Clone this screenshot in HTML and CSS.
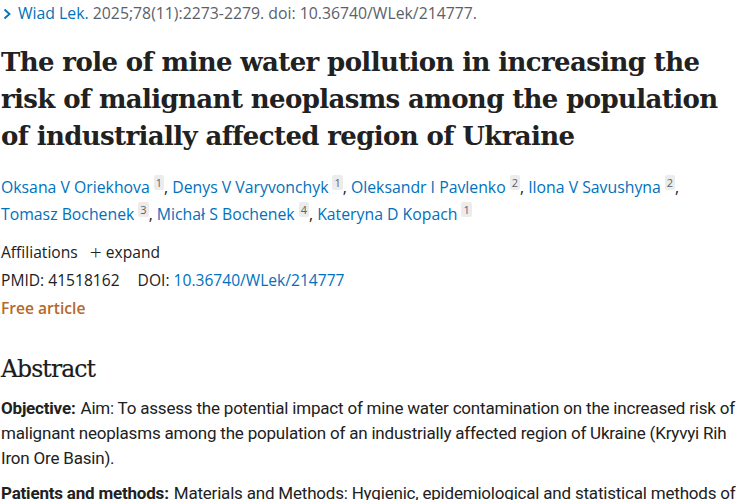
FILE: index.html
```html
<!DOCTYPE html>
<html>
<head>
<meta charset="utf-8">
<link rel="stylesheet" href="styles.css">
</head>
<body>
<div class="page">
  <div class="cite"><svg class="chev" width="9" height="12" viewBox="0 0 9 12"><path d="M1.5 1.5 L6.5 6 L1.5 10.5" fill="none" stroke="#0071bc" stroke-width="1.8"/></svg><a class="link" href="#">Wiad Lek.</a> 2025;78(11):2273-2279. doi: 10.36740/WLek/214777.</div>
  <h1 class="title">The role of mine water pollution in increasing the risk of malignant neoplasms among the population of industrially affected region of Ukraine</h1>
  <div class="authors">
    <a class="link" href="#">Oksana V Oriekhova</a><sup class="aff">1</sup>, <a class="link" href="#">Denys V Varyvonchyk</a><sup class="aff">1</sup>, <a class="link" href="#">Oleksandr I Pavlenko</a><sup class="aff">2</sup>, <a class="link" href="#">Ilona V Savushyna</a><sup class="aff">2</sup>,<br>
    <a class="link" href="#">Tomasz Bochenek</a><sup class="aff">3</sup>, <a class="link" href="#">Michał S Bochenek</a><sup class="aff">4</sup>, <a class="link" href="#">Kateryna D Kopach</a><sup class="aff">1</sup>
  </div>
  <div class="meta">
    <div class="row">Affiliations <span class="expand"><span class="plus">+</span> expand</span></div>
    <div class="row">PMID: 41518162 <span class="doi">DOI: <a class="link" href="#">10.36740/WLek/214777</a></span></div>
    <div class="row free">Free article</div>
  </div>
  <h2 class="abs-h">Abstract</h2>
  <div class="abstract">
    <p class="para"><b>Objective:</b> Aim: To assess the potential impact of mine water contamination on the increased risk of malignant neoplasms among the population of an industrially affected region of Ukraine (Kryvyi Rih Iron Ore Basin).</p>
    <p class="para"><b>Patients and methods:</b> Materials and Methods: Hygienic, epidemiological and statistical methods of research were used.</p>
  </div>
</div>
</body>
</html>
```
FILE: styles.css
```css
html, body { margin: 0; padding: 0; background: #fff; overflow: hidden; }
body { font-family: "Open Sans", "Noto Sans", sans-serif; color: #212121; }
.page { padding: 0 0 0 1px; width: 745px; }
.link { color: #0071bc; text-decoration: none; }
.cite { font-size: 15.8px; color: #5b616b; height: 26px; line-height: 26px; white-space: nowrap; }
.chev { margin: 0 6px 0 2px; vertical-align: -1px; }
.title { font-family: "DejaVu Serif", serif; font-weight: bold; font-size: 26px; line-height: 37px; margin: 18px 0 0 0; color: #212121; letter-spacing: -0.62px; }
.authors { font-size: 15.8px; line-height: 27px; margin-top: 19px; }
.aff { font-size: 11px; color: #5b616b; background: #ececec; padding: 0 2px; margin-left: 4px; vertical-align: 6px; line-height: 14px; border-radius: 2px; }
.meta { margin-top: 10px; font-size: 15.6px; }
.row { line-height: 28px; height: 28px; }
.expand { margin-left: 8px; }
.plus { font-size: 21px; font-weight: 300; vertical-align: -2px; }
.doi { margin-left: 14px; }
.free { color: #b5692a; font-weight: 600; }
.abs-h { font-family: "DejaVu Serif", serif; font-weight: normal; font-size: 23.5px; margin: 32px 0 0 0; line-height: 30px; letter-spacing: -0.9px; color: #1b1b1b; -webkit-text-stroke: 0.2px #1b1b1b; }
.abstract { margin-top: 12px; font-family: Roboto, "Open Sans", sans-serif; font-size: 17px; letter-spacing: -0.2px; }
.para { margin: 0 0 10px 0; line-height: 25px; }
.para b { font-weight: 700; margin-right: 1px; }
```
